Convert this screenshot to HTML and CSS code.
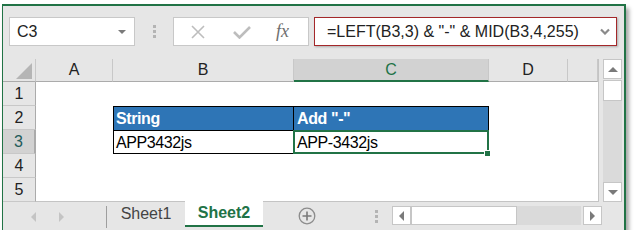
FILE: index.html
```html
<!DOCTYPE html>
<html lang="en">
<head>
    <meta charset="UTF-8">
    <title>Sheet2 - Add dash</title>
    <link rel="stylesheet" href="styles.css">
</head>
<body>
    <div class="window">
        <div class="formula-bar">
            <div class="name-box">
                <span>C3</span>
                <span class="caret"></span>
            </div>
            <div class="grip"><i></i><i></i><i></i></div>
            <div class="fx-box">
                <svg class="ico-x" width="14" height="14" viewBox="0 0 14 14"><path d="M1 1L13 13M13 1L1 13" stroke="#bdbdbd" stroke-width="1.6" fill="none"/></svg>
                <svg class="ico-ok" width="18" height="14" viewBox="0 0 18 14"><path d="M1 7L6.5 12.5L17 2" stroke="#bdbdbd" stroke-width="2.6" fill="none"/></svg>
                <span class="fx">fx</span>
            </div>
            <div class="formula">
                <span class="formula-text">=LEFT(B3,3) &amp; "-" &amp; MID(B3,4,255)</span>
                <svg width="10" height="7" viewBox="0 0 10 7"><path d="M1 1.5L5 5.5L9 1.5" stroke="#8a8a8a" stroke-width="2.2" fill="none"/></svg>
            </div>
        </div>

        <div class="sheet">
            <div class="grid">
                <div class="hd corner"><span class="tri"></span></div>
                <div class="hd col">A</div>
                <div class="hd col">B</div>
                <div class="hd col sel-col">C</div>
                <div class="hd col">D</div>
                <div class="hd col"></div>

                <div class="hd row">1</div>
                <div class="cell"></div><div class="cell"></div><div class="cell"></div><div class="cell"></div><div class="cell"></div>

                <div class="hd row">2</div>
                <div class="cell"></div>
                <div class="cell th first">String</div>
                <div class="cell th">Add "-"</div>
                <div class="cell"></div><div class="cell"></div>

                <div class="hd row sel-row">3</div>
                <div class="cell"></div>
                <div class="cell td first">APP3432js</div>
                <div class="cell td active">APP-3432js</div>
                <div class="cell"></div><div class="cell"></div>

                <div class="hd row">4</div>
                <div class="cell"></div><div class="cell"></div><div class="cell"></div><div class="cell"></div><div class="cell"></div>

                <div class="hd row">5</div>
                <div class="cell"></div><div class="cell"></div><div class="cell"></div><div class="cell"></div><div class="cell"></div>
            </div>
            <div class="vscroll">
                <div class="sbtn"><span class="arr up"></span></div>
                <div class="vthumb"></div>
                <div class="vtrack"></div>
                <div class="sbtn"><span class="arr down"></span></div>
            </div>
        </div>

        <div class="tabs">
            <div class="nav">
                <span class="arr left light"></span>
                <span class="arr right light"></span>
            </div>
            <div class="tab">Sheet1</div>
            <div class="tab current">Sheet2</div>
            <div class="add">
                <svg width="18" height="18" viewBox="0 0 18 18"><circle cx="9" cy="9" r="7.8" stroke="#8c8c8c" stroke-width="1.3" fill="none"/><path d="M9 4.5V13.5M4.5 9H13.5" stroke="#7a7a7a" stroke-width="1.6"/></svg>
            </div>
            <div class="grip h"><i></i><i></i><i></i></div>
            <div class="hscroll">
                <div class="sbtn"><span class="arr left"></span></div>
                <div class="hthumb"></div>
                <div class="htrack"></div>
                <div class="sbtn"><span class="arr right"></span></div>
            </div>
        </div>
    </div>
</body>
</html>
```

FILE: styles.css
```css
body {
    margin: 0;
    background: #fff;
    font-family: "Liberation Sans", Arial, sans-serif;
}
.window {
    box-sizing: border-box;
    width: 624px;
    height: 226px;
    margin: 4px 0 0 2px;
    background: #e6e6e6;
    border-top: 2px solid #217346;
    border-left: 1px solid #217346;
    border-right: 2px solid #217346;
    box-shadow: 3px 4px 4px rgba(0,0,0,0.35);
}

/* formula bar */
.formula-bar {
    display: flex;
    align-items: center;
    height: 53px;
    padding: 11px 0 13px 6px;
    box-sizing: border-box;
}
.name-box {
    box-sizing: border-box;
    width: 126px;
    height: 29px;
    background: #fff;
    border: 1px solid #c8c8c8;
    display: flex;
    align-items: center;
    justify-content: space-between;
    padding: 0 8px 0 7px;
    font-size: 16px;
    color: #222;
}
.caret {
    width: 0;
    height: 0;
    border-left: 4px solid transparent;
    border-right: 4px solid transparent;
    border-top: 4px solid #7a7a7a;
}
.grip {
    display: flex;
    flex-direction: column;
    gap: 2px;
    margin: 0 17px 0 18px;
}
.grip i {
    width: 3px;
    height: 3px;
    background: #b4b4b4;
}
.fx-box {
    box-sizing: border-box;
    width: 136px;
    height: 29px;
    background: #fff;
    border: 1px solid #c8c8c8;
    display: flex;
    align-items: center;
    padding-left: 17px;
}
.ico-ok {
    margin-left: 28px;
}
.fx {
    margin-left: 25px;
    font-family: "Liberation Serif", serif;
    font-style: italic;
    font-size: 18px;
    color: #6e6e6e;
}
.formula {
    box-sizing: border-box;
    width: 303px;
    height: 29px;
    margin-left: 5px;
    background: #fff;
    border: 1px solid #a4282a;
    box-shadow: 1px 1px 2px rgba(0,0,0,0.25);
    display: flex;
    align-items: center;
    justify-content: space-between;
    padding: 0 6px 0 12px;
    font-size: 16px;
    color: #222;
}

/* grid */
.sheet {
    display: flex;
    height: 143px;
}
.grid {
    box-sizing: border-box;
    width: 596px;
    display: grid;
    grid-template-columns: 33px 77px 181px 195px 79px 1fr;
    grid-template-rows: 23px repeat(5, 24px);
    background: #fff;
    border-right: 1px solid #c4c4c4;
    border-bottom: 1px solid #c4c4c4;
}
.hd {
    box-sizing: border-box;
    background: #e6e6e6;
    border-right: 1px solid #c8c8c8;
    border-bottom: 1px solid #ababab;
    display: flex;
    align-items: center;
    justify-content: center;
    font-size: 16px;
    color: #222;
}
.corner {
    position: relative;
}
.tri {
    position: absolute;
    right: 3px;
    bottom: 2px;
    width: 0;
    height: 0;
    border-left: 16px solid transparent;
    border-bottom: 16px solid #b5b5b5;
}
.hd.row {
    border-bottom-color: #c8c8c8;
    border-right-color: #ababab;
}
.sel-col {
    background: #d2d2d2;
    border-bottom: 2px solid #217346;
    color: #217346;
}
.sel-row {
    background: #d2d2d2;
    border-right: 2px solid #217346;
    color: #1e5b5a;
}
.cell {
    box-sizing: border-box;
    font-size: 16px;
    letter-spacing: -0.4px;
    line-height: 23px;
    padding: 1px 0 0 3px;
    color: #000;
    white-space: nowrap;
}
.th {
    background: #2e75b6;
    color: #fff;
    font-weight: bold;
    border-top: 1px solid #000;
    border-right: 1px solid #000;
    padding-top: 0;
}
.td {
    border-top: 1px solid #000;
    border-right: 1px solid #000;
    border-bottom: 1px solid #000;
    padding-top: 0;
}
.first {
    border-left: 1px solid #000;
    padding-left: 2px;
}
.active {
    position: relative;
}
.active::after {
    content: "";
    position: absolute;
    left: -1px;
    top: -1px;
    right: -1px;
    bottom: -1px;
    border: 2px solid #217346;
}
.active::before {
    content: "";
    position: absolute;
    right: -3px;
    bottom: -4px;
    width: 5px;
    height: 5px;
    background: #217346;
    border: 1px solid #fff;
    z-index: 1;
}

/* scrollbars */
.vscroll {
    width: 19px;
    margin-left: 4px;
    display: flex;
    flex-direction: column;
}
.sbtn {
    box-sizing: border-box;
    width: 19px;
    height: 20px;
    background: #fff;
    border: 1px solid #c6c6c6;
    display: flex;
    align-items: center;
    justify-content: center;
}
.vthumb {
    box-sizing: border-box;
    height: 21px;
    background: #fff;
    border: 1px solid #c6c6c6;
    margin-top: 1px;
}
.vtrack {
    flex: 1;
    background: #dadada;
}
.arr {
    width: 0;
    height: 0;
}
.arr.up {
    border-left: 5px solid transparent;
    border-right: 5px solid transparent;
    border-bottom: 5px solid #7a7a7a;
}
.arr.down {
    border-left: 5px solid transparent;
    border-right: 5px solid transparent;
    border-top: 5px solid #7a7a7a;
}
.arr.left {
    border-top: 5px solid transparent;
    border-bottom: 5px solid transparent;
    border-right: 5px solid #7a7a7a;
}
.arr.right {
    border-top: 5px solid transparent;
    border-bottom: 5px solid transparent;
    border-left: 5px solid #7a7a7a;
}
.arr.light.left {
    border-right-color: #c4c4c4;
}
.arr.light.right {
    border-left-color: #c4c4c4;
}

/* sheet tabs */
.tabs {
    display: flex;
    align-items: flex-start;
    height: 28px;
}
.nav {
    box-sizing: border-box;
    width: 104px;
    height: 22px;
    margin-top: 4px;
    display: flex;
    align-items: center;
    padding-left: 28px;
    gap: 23px;
    border-right: 1px solid #9e9e9e;
}
.tab {
    width: 78px;
    height: 24px;
    display: flex;
    align-items: center;
    justify-content: center;
    font-size: 16px;
    color: #444;
}
.tab.current {
    background: #fff;
    color: #217346;
    font-weight: bold;
    border-bottom: 2px solid #217346;
    margin-top: -1px;
}
.add {
    margin: 5px 0 0 35px;
    display: flex;
}
.grip.h {
    margin: 8px 0 0 59px;
    gap: 2px;
}
.hscroll {
    display: flex;
    margin: 4px 0 0 14px;
}
.hscroll .sbtn {
    width: 19px;
    height: 19px;
}
.hthumb {
    box-sizing: border-box;
    width: 106px;
    height: 19px;
    background: #fff;
    border: 1px solid #c6c6c6;
}
.htrack {
    width: 64px;
    height: 19px;
    background: #dadada;
    margin-right: 2px;
}
```
